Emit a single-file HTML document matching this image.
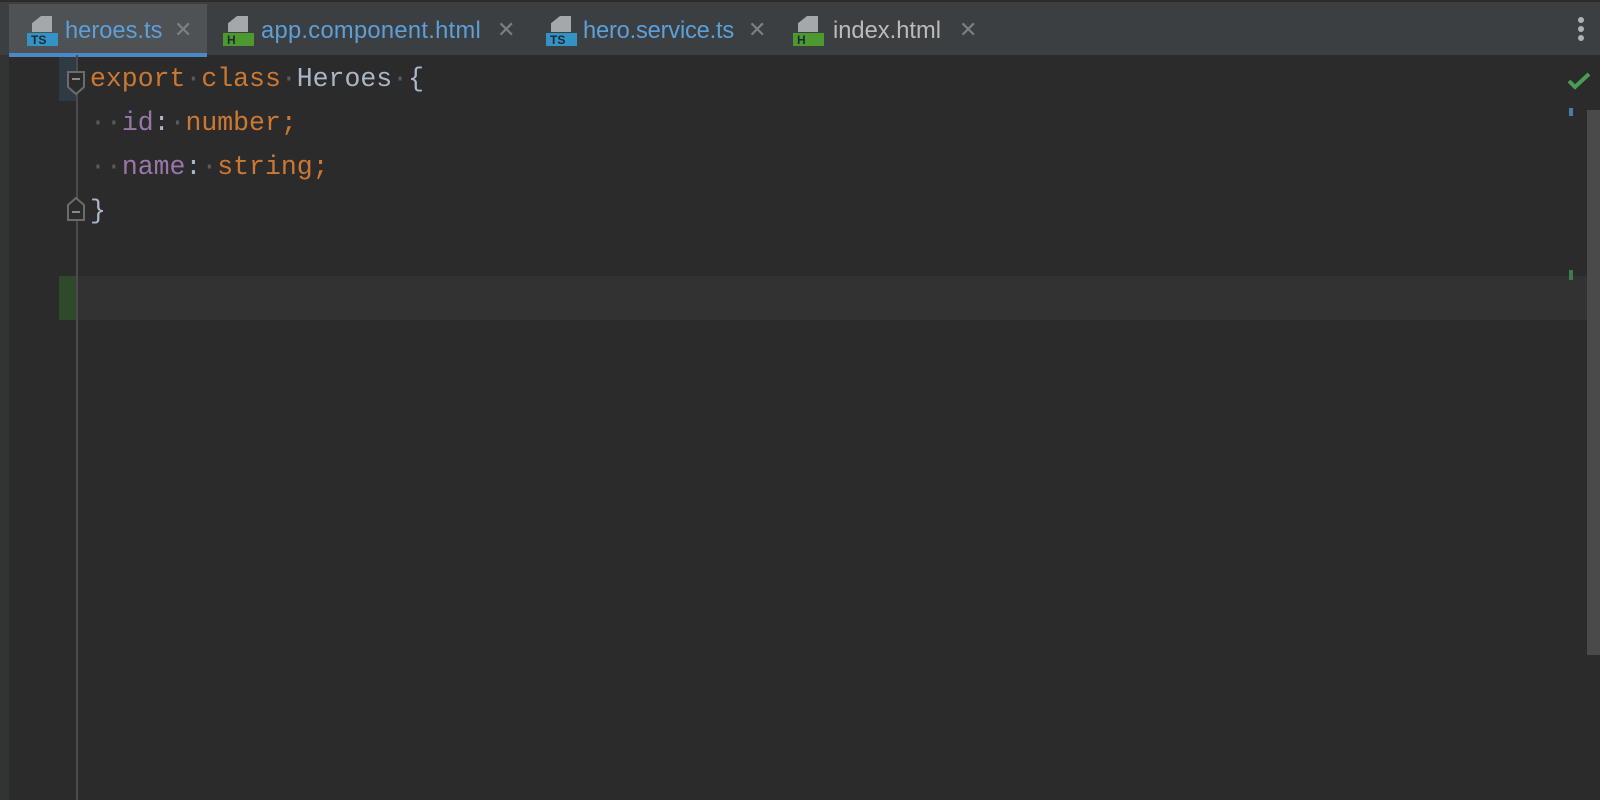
<!DOCTYPE html>
<html><head><style>
body{margin:0;width:1600px;height:800px;background:#2b2b2b;overflow:hidden;position:relative;font-family:"Liberation Sans",sans-serif}
.tabbar{position:absolute;left:0;top:0;width:1600px;height:55px;background:#3c3f41;border-top:2px solid #2b2b2b;box-sizing:border-box}
.active{position:absolute;left:9px;top:2px;width:198px;height:53px;background:#4e5254}
.active:after{content:"";position:absolute;left:0;bottom:0;width:198px;height:4px;background:#4a88c7}
.t{position:absolute;top:15px;font-size:23.7px;line-height:28px;white-space:nowrap}
.x{position:absolute;top:17px;font-size:22px;color:#7d8082;line-height:22px}
.ic{position:absolute;top:14px;width:31px;height:31px}
.ic .pg{position:absolute;left:5px;top:0;width:20px;height:16px;background:#a4a8ab;clip-path:polygon(45% 0,100% 0,100% 100%,0 100%,0 45%)}
.ic .b{position:absolute;left:0;top:17px;width:31px;height:13px;font-size:12px;font-weight:bold;color:#1e2a30;line-height:14px;padding-left:4px;box-sizing:border-box}
.code{position:absolute;left:90px;font-family:"Liberation Mono",monospace;font-size:26.5px;line-height:44px;color:#a9b7c6;white-space:pre}
.k{color:#cc7832}.p{color:#9876aa}.d{color:#5a5a5a}
</style></head><body>
<div class="tabbar">
<div class="active"></div>
<div class="ic" style="left:27px"><div class="pg"></div><div class="b" style="background:#3592c4">TS</div></div>
<div class="t" style="left:65px;color:#5c9fd9">heroes.ts</div><div class="x" style="left:174px">✕</div>
<div class="ic" style="left:223px"><div class="pg"></div><div class="b" style="background:#4c9a2f">H</div></div>
<div class="t" style="left:261px;color:#5c9fd9;letter-spacing:0.3px">app.component.html</div><div class="x" style="left:497px">✕</div>
<div class="ic" style="left:546px"><div class="pg"></div><div class="b" style="background:#3592c4">TS</div></div>
<div class="t" style="left:583px;color:#5c9fd9;letter-spacing:-0.2px">hero.service.ts</div><div class="x" style="left:748px">✕</div>
<div class="ic" style="left:793px"><div class="pg"></div><div class="b" style="background:#4c9a2f">H</div></div>
<div class="t" style="left:833px;color:#bbbbbb">index.html</div><div class="x" style="left:959px">✕</div>
<div style="position:absolute;left:1578px;top:15px;width:6px">
<div style="width:6px;height:6px;border-radius:3px;background:#afb1b3;margin-bottom:3px"></div>
<div style="width:6px;height:6px;border-radius:3px;background:#afb1b3;margin-bottom:3px"></div>
<div style="width:6px;height:6px;border-radius:3px;background:#afb1b3"></div></div>
</div>
<div style="position:absolute;left:0;top:55px;width:9px;height:745px;background:#313335"></div>
<div style="position:absolute;left:76px;top:55px;width:2px;height:745px;background:#4b4b4b"></div>
<div style="position:absolute;left:59px;top:57px;width:17px;height:44px;background:#2e3b45"></div>
<div style="position:absolute;left:78px;top:276px;width:1509px;height:44px;background:#323232"></div>
<div style="position:absolute;left:59px;top:276px;width:17px;height:44px;background:#2f4a2b"></div>
<svg style="position:absolute;left:66px;top:70px" width="22" height="26"><path d="M2 2H18V17L10 24L2 17Z" fill="#2b2b2b" stroke="#6b6b6b" stroke-width="2"/><path d="M6 9H14" stroke="#8a8a8a" stroke-width="2"/></svg>
<svg style="position:absolute;left:66px;top:196px" width="22" height="26"><path d="M2 9L10 2L18 9V24H2Z" fill="#2b2b2b" stroke="#6b6b6b" stroke-width="2"/><path d="M6 16H14" stroke="#8a8a8a" stroke-width="2"/></svg>
<div class="code" style="top:57px"><span class="k">export</span><span class="d">·</span><span class="k">class</span><span class="d">·</span>Heroes<span class="d">·</span>{</div>
<div class="code" style="top:101px"><span class="d">··</span><span class="p">id</span>:<span class="d">·</span><span class="k">number;</span></div>
<div class="code" style="top:145px"><span class="d">··</span><span class="p">name</span>:<span class="d">·</span><span class="k">string;</span></div>
<div class="code" style="top:189px">}</div>
<svg style="position:absolute;left:1567px;top:71px" width="26" height="20"><path d="M2 10L8 16L22 3" fill="none" stroke="#499c54" stroke-width="4"/></svg>
<div style="position:absolute;left:1569px;top:108px;width:4px;height:8px;background:#4a7ab0"></div>
<div style="position:absolute;left:1569px;top:270px;width:4px;height:10px;background:#3f7a4a"></div>
<div style="position:absolute;left:1587px;top:110px;width:13px;height:545px;background:#4a4a4a"></div>
</body></html>
